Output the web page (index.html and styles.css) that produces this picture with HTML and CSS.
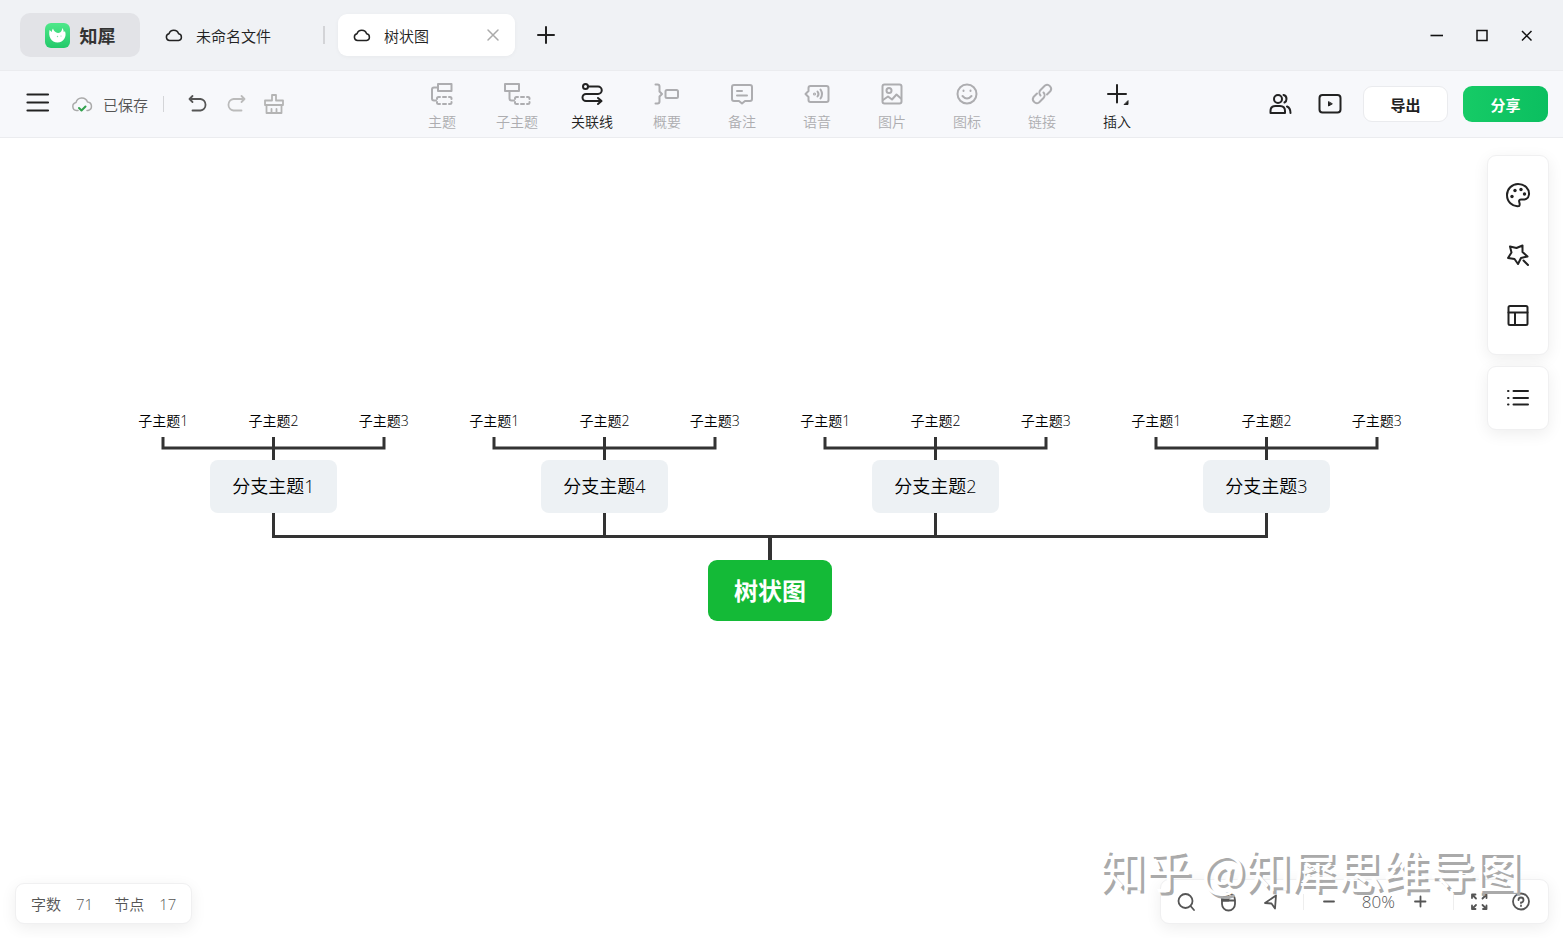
FILE: index.html
```html
<!DOCTYPE html>
<html lang="zh-CN">
<head>
    <meta charset="UTF-8">
    <meta name="viewport" content="width=device-width, initial-scale=1.0">
    <title>知犀 - 树状图</title>
    <link rel="stylesheet" href="styles.css">
</head>
<body>
    <!-- 标签栏 -->
    <header class="tabbar">
        <button class="home">
            <svg width="25" height="25" viewBox="0 0 25 25">
                <defs>
                    <linearGradient id="logoBg" x1="0" y1="0" x2="0" y2="1">
                        <stop offset="0" stop-color="#4fe88a"/>
                        <stop offset="1" stop-color="#22c96a"/>
                    </linearGradient>
                </defs>
                <rect width="25" height="25" rx="6" fill="url(#logoBg)"/>
                <path d="M4.500 7C5.500 7.500 6 8.500 6.800 9C7 7.500 7.300 6.500 8 5.500C8.500 7 9 8 10.500 9C12 10 13.500 10.300 15 9.500C16.500 8.500 17 7.500 17.300 5C18.300 6.500 18.700 7.500 18.700 9L20 8.300C21 11 20.700 13.500 19.300 15.700C18 18 15.500 19.500 12.500 19.500C9.500 19.500 7 18 5.500 15.500C4 13 4 10 4.500 7Z" fill="#fff"/>
                <circle cx="12.500" cy="13.500" r="0.700" fill="#7be0a3"/>
                <circle cx="16" cy="13" r="0.600" fill="#7be0a3"/>
            </svg>
            <span>知犀</span>
        </button>
        <button class="tab">
            <svg class="icon" width="18" height="18" viewBox="0 0 18 18"><path d="M4.600 14.500A3.400 3.400 0 0 1 4 7.800A5 5 0 0 1 13.600 7.800A3.400 3.400 0 0 1 13.600 14.500Z"/></svg>
            <span>未命名文件</span>
        </button>
        <span class="tab-line"></span>
        <div class="tab active">
            <svg class="icon" width="18" height="18" viewBox="0 0 18 18"><path d="M4.600 14.500A3.400 3.400 0 0 1 4 7.800A5 5 0 0 1 13.600 7.800A3.400 3.400 0 0 1 13.600 14.500Z"/></svg>
            <span>树状图</span>
            <button class="close" aria-label="关闭标签">
                <svg class="icon" width="14" height="14" viewBox="0 0 14 14"><path d="M2 2L12 12M12 2L2 12"/></svg>
            </button>
        </div>
        <button class="add" aria-label="新建标签">
            <svg class="icon" width="18" height="18" viewBox="0 0 18 18"><path d="M9 1V17M1 9H17" stroke-width="2"/></svg>
        </button>
        <div class="window-btns">
            <button aria-label="最小化"><svg width="14" height="14" viewBox="0 0 14 14"><path d="M0.500 7.500H13" stroke="#111" stroke-width="1.600"/></svg></button>
            <button aria-label="最大化"><svg width="14" height="14" viewBox="0 0 14 14"><path d="M2 2.500H12V12.500H2Z" fill="none" stroke="#111" stroke-width="1.500"/></svg></button>
            <button aria-label="关闭"><svg width="14" height="14" viewBox="0 0 14 14"><path d="M2 3L11.500 12.500M11.500 3L2 12.500" stroke="#111" stroke-width="1.500"/></svg></button>
        </div>
    </header>

    <!-- 工具栏 -->
    <nav class="toolbar">
        <div class="tool-left">
            <button class="menu" aria-label="菜单">
                <svg class="icon" width="24" height="22" viewBox="0 0 24 22"><path d="M1.500 1.500H22M1.500 9.500H22M1.500 17.500H22" stroke-width="2.200"/></svg>
            </button>
            <div class="saved">
                <svg class="icon" width="22" height="18" viewBox="0 0 22 18">
                    <path d="M7 15.500H5.500A4 4 0 0 1 5 7.600A6 6 0 0 1 16.500 7A4.300 4.300 0 0 1 17 15.500H16" stroke="#aaa"/>
                    <path d="M8 13L10.500 15.500L14.500 11.500" stroke="#31a24c" stroke-width="2"/>
                </svg>
                <span>已保存</span>
            </div>
            <span class="line"></span>
            <button class="small-btn" aria-label="撤销">
                <svg class="icon" width="20" height="20" viewBox="0 0 20 20"><path d="M4.500 2L1.500 5L4.500 8M1.500 5H12.500A5.800 5.800 0 0 1 12.500 16.500H4.500" stroke="#555"/></svg>
            </button>
            <button class="small-btn" aria-label="重做">
                <svg class="icon" width="20" height="20" viewBox="0 0 20 20"><path d="M15.500 2L18.500 5L15.500 8M18.500 5H7.500A5.800 5.800 0 0 0 7.500 16.500H15.500" stroke="#bbb"/></svg>
            </button>
            <button class="small-btn" aria-label="格式刷">
                <svg class="icon" width="20" height="20" viewBox="0 0 20 20"><path d="M8 1H12V6.500H19V11H1V6.500H8ZM2.500 11V19H17.500V11M7.500 19V15M12.500 19V15" stroke="#b4b4b4"/></svg>
            </button>
        </div>

        <div class="tools">
            <button class="tool">
                <svg class="icon" width="26" height="24" viewBox="0 0 26 24"><path d="M9 2H22.500V9H9ZM9 5.500H5Q3 5.500 3 7.500V16.500Q3 18.500 5 18.500H7"/><path d="M11 15H9.500Q8 15 8 16.500V17M8 20V21Q8 22 9.500 22H11M14 15H17M14 22H17M20 15H21Q22.500 15 22.500 16.500V17M22.500 20V21Q22.500 22 21 22H20"/></svg>
                <span>主题</span>
            </button>
            <button class="tool">
                <svg class="icon" width="28" height="24" viewBox="0 0 28 24"><path d="M2 2H16V9H2ZM6.500 9V16.500Q6.500 18.500 8.500 18.500H11"/><path d="M15 15H13.500Q12 15 12 16.500V17M12 20V21Q12 22 13.500 22H15M18 15H21M18 22H21M24 15H25Q26.500 15 26.500 16.500V17M26.500 20V21Q26.500 22 25 22H24"/></svg>
                <span>子主题</span>
            </button>
            <button class="tool on">
                <svg class="icon" width="24" height="24" viewBox="0 0 24 24"><circle cx="5.500" cy="4.500" r="2.500"/><path d="M8 4.500H18A3.700 3.700 0 0 1 18 12H6A3.500 3.500 0 0 0 6 19H21M18 16L21.500 19L18 22"/></svg>
                <span>关联线</span>
            </button>
            <button class="tool">
                <svg class="icon" width="26" height="24" viewBox="0 0 26 24"><path d="M1.500 2.500H3.500Q5.500 2.500 5.500 4.500V9.500L8 12L5.500 14.500V19.500Q5.500 21.500 3.500 21.500H1.500M13 8H22.500Q24 8 24 9.500V14.500Q24 16 22.500 16H13Q11.500 16 11.500 14.500V9.500Q11.500 8 13 8Z"/></svg>
                <span>概要</span>
            </button>
            <button class="tool">
                <svg class="icon" width="24" height="24" viewBox="0 0 24 24"><path d="M4 3H20Q22 3 22 5V17Q22 19 20 19H15L12 21.500L9 19H4Q2 19 2 17V5Q2 3 4 3ZM7 9H12M7 13.500H17"/></svg>
                <span>备注</span>
            </button>
            <button class="tool">
                <svg class="icon" width="26" height="24" viewBox="0 0 26 24"><path d="M6.500 4H22.500Q24.500 4 24.500 6V18Q24.500 20 22.500 20H6.500Q4.500 20 4.500 18V15L1.500 12L4.500 9V6Q4.500 4 6.500 4Z"/><path d="M13.500 9.500Q15.500 12 13.500 14.500M16.500 7.500Q19.500 12 16.500 16.500"/><circle cx="10.500" cy="12" r="0.600"/></svg>
                <span>语音</span>
            </button>
            <button class="tool">
                <svg class="icon" width="24" height="24" viewBox="0 0 24 24"><rect x="2.500" y="2.500" width="19" height="19" rx="2"/><circle cx="9" cy="8.500" r="2.500"/><path d="M3 18L8 14.500L12 17.500L16.500 12.500L21 16.500"/></svg>
                <span>图片</span>
            </button>
            <button class="tool">
                <svg class="icon" width="24" height="24" viewBox="0 0 24 24"><circle cx="12" cy="12" r="9.500"/><path d="M7.500 14Q12 19 16.500 14"/><path d="M8.500 8.500V9M15.500 8.500V9"/></svg>
                <span>图标</span>
            </button>
            <button class="tool">
                <svg class="icon" width="24" height="24" viewBox="0 0 24 24"><path d="M10.500 13.500A4 4 0 0 1 10.500 8L15 3.500A4 4 0 0 1 20.500 9L17 12.500"/><path d="M13.500 10.500A4 4 0 0 1 13.500 16L9 20.500A4 4 0 0 1 3.500 15L7 11.500"/></svg>
                <span>链接</span>
            </button>
            <button class="tool on">
                <svg class="icon" width="24" height="24" viewBox="0 0 24 24"><path d="M12 3V20.500M3 12H21"/><path d="M23 19V22.500H19.500Z" fill="#222" stroke-width="1"/></svg>
                <span>插入</span>
            </button>
        </div>

        <div class="tool-right">
            <button class="icon-btn" aria-label="协作">
                <svg class="icon" width="24" height="24" viewBox="0 0 24 24"><circle cx="10" cy="7" r="4"/><path d="M2.500 21V19Q2.500 14 7.500 14H12Q17 14 17 19V21ZM15.500 3Q18.500 3.500 18.500 7Q18.500 9.500 16.500 10.500M19 14.500Q22.500 16 22.500 21"/></svg>
            </button>
            <button class="icon-btn" aria-label="演示">
                <svg class="icon" width="24" height="24" viewBox="0 0 24 24"><rect x="1.500" y="3" width="21" height="17.500" rx="3"/><path d="M10.500 10V14L14 12Z" fill="#222" stroke-width="1"/></svg>
            </button>
            <button class="export">导出</button>
            <button class="export share">分享</button>
        </div>
    </nav>

    <!-- 画布 -->
    <main class="canvas">
        <div class="tree">
            <div class="branches">
                <section class="branch">
                    <div class="children"><span>子主题1</span><span>子主题2</span><span>子主题3</span></div>
                    <svg class="wire" width="331" height="24" viewBox="0 0 331 24"><path d="M55 1V12H276V1M165.500 1V24"/></svg>
                    <div class="node">分支主题1</div>
                </section>
                <section class="branch">
                    <div class="children"><span>子主题1</span><span>子主题2</span><span>子主题3</span></div>
                    <svg class="wire" width="331" height="24" viewBox="0 0 331 24"><path d="M55 1V12H276V1M165.500 1V24"/></svg>
                    <div class="node">分支主题4</div>
                </section>
                <section class="branch">
                    <div class="children"><span>子主题1</span><span>子主题2</span><span>子主题3</span></div>
                    <svg class="wire" width="331" height="24" viewBox="0 0 331 24"><path d="M55 1V12H276V1M165.500 1V24"/></svg>
                    <div class="node">分支主题2</div>
                </section>
                <section class="branch">
                    <div class="children"><span>子主题1</span><span>子主题2</span><span>子主题3</span></div>
                    <svg class="wire" width="331" height="24" viewBox="0 0 331 24"><path d="M55 1V12H276V1M165.500 1V24"/></svg>
                    <div class="node">分支主题3</div>
                </section>
            </div>
            <svg class="wire" width="1324" height="47" viewBox="0 0 1324 47"><path d="M165.500 0V23.500H1158.500V0M496.500 0V23.500M827.500 0V23.500"/><path d="M662 22V47" stroke-width="4"/></svg>
            <div class="root">树状图</div>
        </div>

        <!-- 右侧面板 -->
        <aside class="side">
            <div class="panel">
                <button aria-label="主题风格">
                    <svg class="icon" width="26" height="26" viewBox="0 0 26 26"><path d="M14 24C7 25 2 19.500 2 13A11 11 0 0 1 13 2C20 2 24.500 7 24 12.500C23.500 17 20 18 16 17.500C13.500 17.500 14 19.500 14.500 21Q15 23.500 14 24Z"/><g fill="#222" stroke="none"><circle cx="7" cy="14.500" r="1.700"/><circle cx="10" cy="8.500" r="1.700"/><circle cx="16" cy="7.500" r="1.700"/><circle cx="19.500" cy="12" r="1.700"/></g></svg>
                </button>
                <button aria-label="样式">
                    <svg class="icon" width="26" height="26" viewBox="0 0 26 26"><path d="M5 4.500L11.500 6L17.500 3.500V10L22.500 14.500L16 16L13 22L9.500 17L3 16L6.500 10.500ZM18.500 18.500L23 23"/></svg>
                </button>
                <button aria-label="结构">
                    <svg class="icon" width="26" height="26" viewBox="0 0 26 26"><rect x="3.500" y="4" width="19" height="19" rx="1.500"/><path d="M3.500 10.500H22.500M10 10.500V23"/></svg>
                </button>
            </div>
            <div class="panel single">
                <button aria-label="大纲">
                    <svg class="icon" width="26" height="26" viewBox="0 0 26 26"><path d="M8.500 6H23M8.500 13H23M8.500 19.500H23M3 6H3.500M3 13H3.500M3 19.500H3.500"/></svg>
                </button>
            </div>
        </aside>

        <!-- 字数统计 -->
        <div class="stats">
            <span>字数</span><span>71</span>
            <span class="nodes">节点</span><span>17</span>
        </div>

        <!-- 缩放栏 -->
        <div class="zoombar">
            <button aria-label="搜索"><svg class="icon" width="20" height="20" viewBox="0 0 20 20"><circle cx="9.500" cy="9" r="7"/><path d="M14.500 14L18 18"/></svg></button>
            <button aria-label="鼠标"><svg class="icon" width="20" height="20" viewBox="0 0 20 20"><path d="M4 8.500A6.500 7 0 0 1 10.500 1.500V8.500Z" fill="#555"/><path d="M4 8V12A6.500 6.500 0 0 0 17 12V8A6.500 6.500 0 0 0 4 8ZM4 8.500H17"/></svg></button>
            <button aria-label="定位"><svg class="icon" width="20" height="20" viewBox="0 0 20 20"><path d="M16 3.500L5 11L11.500 11.500L15 16.500Z"/></svg></button>
            <span class="line"></span>
            <button aria-label="缩小"><svg class="icon" width="20" height="20" viewBox="0 0 20 20"><path d="M5 9.500H15"/></svg></button>
            <span class="percent">80%</span>
            <button aria-label="放大"><svg class="icon" width="20" height="20" viewBox="0 0 20 20"><path d="M5 9.500H15.500M10.500 4.500V14.500"/></svg></button>
            <span class="line"></span>
            <button aria-label="全屏"><svg class="icon" width="20" height="20" viewBox="0 0 20 20"><path d="M6.500 2.500H3V6M3 2.500L7 6.500M14 2.500H17.500V6M17.500 2.500L13.500 6.500M6.500 17H3V13.500M3 17L7 13M14 17H17.500V13.500M17.500 17L13.500 13"/></svg></button>
            <button aria-label="帮助"><svg class="icon" width="20" height="20" viewBox="0 0 20 20"><circle cx="10" cy="9.500" r="8"/><path d="M7.500 8A2.500 2.500 0 1 1 10 10.500V11M10 13.500V14"/></svg></button>
        </div>

        <p class="watermark">知乎 @知犀思维导图</p>
    </main>
</body>
</html>
```

FILE: styles.css
```css
*{
    margin: 0;
    padding: 0;
    box-sizing: border-box;
}

body{
    display: flex;
    flex-direction: column;
    min-height: 100vh;
    font-family: "Open Sans", "Noto Sans CJK SC", sans-serif;
    font-size: 15px;
    font-weight: 350;
    color: #222;
    background-color: #fff;
}

button{
    display: flex;
    align-items: center;
    justify-content: center;
    border: none;
    background: none;
    font: inherit;
    color: inherit;
    cursor: pointer;
}

svg{
    display: block;
    flex-shrink: 0;
}

/* 线条图标 */
.icon{
    fill: none;
    stroke: currentColor;
    stroke-width: 2;
    stroke-linecap: round;
    stroke-linejoin: round;
}

/* 标签栏 */
.tabbar{
    display: flex;
    align-items: center;
    height: 70px;
    padding: 0 14px 0 20px;
    background-color: #f0f2f5;
}

.home{
    gap: 10px;
    width: 120px;
    height: 44px;
    margin-right: 10px;
    border-radius: 10px;
    background-color: #e2e3e7;
    font-size: 18px;
    font-weight: bold;
    color: #333;
}

.tab{
    justify-content: flex-start;
    display: flex;
    align-items: center;
    gap: 13px;
    width: 173px;
    height: 42px;
    padding: 0 15px;
}

.tab .icon{
    stroke-width: 1.5;
}

.tab.active{
    width: 177px;
    border-radius: 9px;
    background-color: #fff;
    box-shadow: 0 1px 4px rgba(0, 0, 0, 0.04);
}

.tab-line{
    width: 2px;
    height: 18px;
    margin-right: 13px;
    background-color: #d3d4d7;
}

.close{
    margin-left: auto;
    color: #aaa;
}

.add{
    margin-left: 22px;
}

.window-btns{
    display: flex;
    margin-left: auto;
}

.window-btns button{
    width: 45px;
    height: 40px;
}

/* 工具栏 */
.toolbar{
    display: grid;
    grid-template-columns: 1fr auto 1fr;
    align-items: center;
    height: 68px;
    padding: 0 15px 0 11px;
    border-top: 1px solid #ebecef;
    border-bottom: 1px solid #ebecef;
    background-color: #f7f8fb;
}

.tool-left{
    display: flex;
    align-items: center;
    padding-left: 15px;
}

.saved{
    display: flex;
    align-items: center;
    gap: 10px;
    margin-left: 21px;
    color: #555;
}

.saved .icon{
    stroke-width: 1.5;
}

.line{
    width: 1px;
    height: 16px;
    background-color: #d4d5d8;
}

.tool-left .line{
    margin: 0 16px 0 15px;
}

.small-btn{
    width: 38px;
    height: 36px;
    justify-content: flex-start;
    padding-left: 8px;
}

.small-btn .icon{
    stroke-width: 1.8;
}

.tools{
    display: flex;
    padding-top: 5px;
}

.tool{
    flex-direction: column;
    gap: 6px;
    width: 75px;
    font-size: 14px;
    line-height: 20px;
    color: #adadb0;
}

.tool.on{
    color: #222;
}

.tool-right{
    display: flex;
    align-items: center;
    justify-content: flex-end;
}

.icon-btn{
    width: 26px;
    height: 26px;
    margin-right: 24px;
}

.icon-btn + .icon-btn{
    margin-right: 20px;
}

.export{
    width: 85px;
    height: 36px;
    border: 1px solid #eaebee;
    border-radius: 9px;
    background-color: #fff;
    font-weight: bold;
}

.share{
    margin-left: 15px;
    border: none;
    background: linear-gradient(90deg, #16cb66, #0bbf60);
    color: #fff;
}

/* 画布 */
.canvas{
    flex: 1;
    position: relative;
    padding: 272px 23px 0 0;
}

.tree{
    display: flex;
    flex-direction: column;
    align-items: center;
    color: #000;
}

.branches{
    display: flex;
}

.branch{
    display: flex;
    flex-direction: column;
    align-items: center;
    width: 331px;
}

.children{
    display: grid;
    grid-template-columns: repeat(3, 1fr);
    align-self: stretch;
    padding-bottom: 4px;
    text-align: center;
    font-size: 14px;
    line-height: 22px;
}

/* 连接线 */
.wire{
    fill: none;
    stroke: #333;
    stroke-width: 3;
}

.node{
    padding: 0 22px;
    border-radius: 8px;
    background-color: #edf1f4;
    font-size: 18px;
    line-height: 53px;
}

.root{
    padding: 0 26px;
    border-radius: 9px;
    background-color: #14ba37;
    font-size: 24px;
    font-weight: bold;
    line-height: 61px;
    color: #fff;
}

/* 右侧面板 */
.side{
    position: absolute;
    top: 17px;
    right: 14px;
    display: grid;
    gap: 11px;
}

.panel,
.stats,
.zoombar{
    border: 1px solid #f0f0f1;
    border-radius: 9px;
    background-color: #fff;
    box-shadow: 0 4px 16px rgba(0, 0, 0, 0.07);
}

.panel{
    width: 62px;
    padding: 9px 0;
}

.panel button{
    width: 60px;
    height: 60px;
}

.panel.single{
    padding: 1px 0;
}

/* 底部的浮层 */
.stats,
.zoombar{
    position: absolute;
    bottom: 14px;
    display: flex;
    align-items: center;
    color: #555;
}

.stats{
    left: 15px;
    gap: 15px;
    height: 41px;
    padding: 0 15px;
}

.nodes{
    margin-left: 6px;
}

.zoombar{
    right: 14px;
    height: 45px;
    padding: 0 17px 0 15px;
}

.zoombar .icon{
    stroke-width: 1.8;
}

.zoombar button{
    width: 20px;
    height: 20px;
}

.zoombar button + button{
    margin-left: 22px;
}

.zoombar .line{
    margin: 0 15px 0 23px;
    background-color: #eee;
}

.percent{
    margin: 0 15px 0 23px;
    font-size: 17px;
    line-height: 24px;
}

/* 水印 */
.watermark{
    position: absolute;
    right: 42px;
    bottom: 36px;
    font-family: "Noto Sans CJK SC", sans-serif;
    font-size: 46px;
    font-weight: 400;
    line-height: 68px;
    white-space: nowrap;
    color: #fff;
    text-shadow: 3px 3px 0 #aaa;
    pointer-events: none;
}
```
